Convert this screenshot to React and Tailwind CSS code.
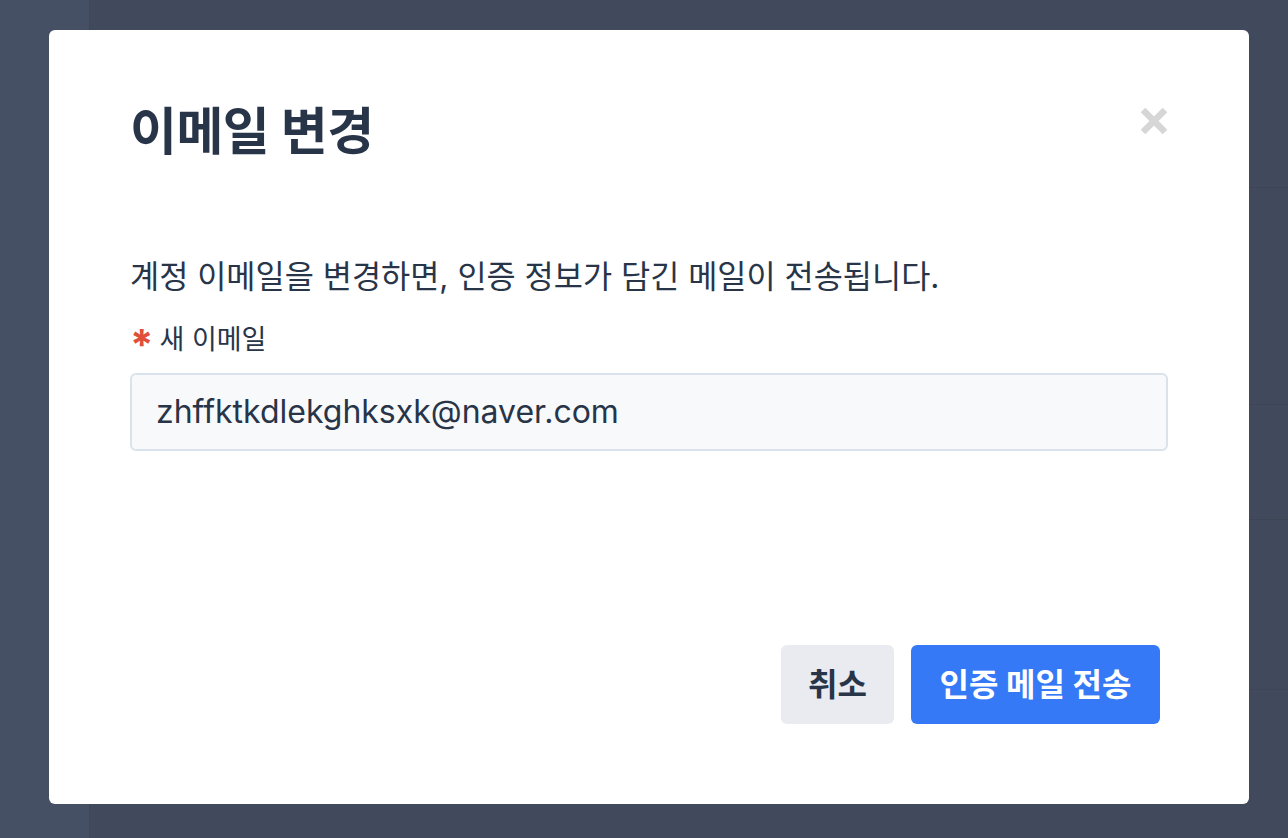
import React from "react";

const font = { fontFamily: 'Inter, "Noto Sans CJK KR", sans-serif' };

export default function App() {
  return (
    <div className="relative w-[1288px] h-[838px] overflow-hidden bg-[#414a5c]" style={font}>
      {/* background page behind overlay */}
      <div className="flex h-full">
        <div className="w-[90px] h-full bg-[#465064] border-r border-[#3e4657]" />
        <div className="flex-1 flex flex-col">
          <div className="h-[188px] border-b border-[#3d4555]" />
          <div className="h-[217px] border-b border-[#3d4555]" />
          <div className="h-[115px] border-b border-[#3d4555]" />
          <div className="h-[170px] border-b border-[#3d4555]" />
          <div className="flex-1" />
        </div>
      </div>

      {/* modal */}
      <div className="absolute left-[49px] top-[30px] w-[1200px] h-[774px] bg-white rounded-[6px] flex flex-col pl-[81px] pr-[81px] pt-[72px] pb-[80px]">
        <div className="flex items-start justify-between">
          <h2 className="text-[51px] leading-[60px] font-bold text-[#283548] tracking-[-0.5px]">이메일 변경</h2>
          <button className="mt-[4px] -mr-[1px] w-[30px] h-[30px] flex items-center justify-center text-[#d6d6d6]">
            <svg width="28" height="28" viewBox="0 0 28 28">
              <path d="M3 3 L25 25 M25 3 L3 25" stroke="currentColor" strokeWidth="6.5" strokeLinecap="butt" />
            </svg>
          </button>
        </div>

        <p className="mt-[95px] text-[31.7px] leading-[40px] text-[#283548]">
          계정 이메일을 변경하면, 인증 정보가 담긴 메일이 전송됩니다.
        </p>

        <label className="mt-[26px] h-[34px] flex items-center text-[27px] leading-[34px] text-[#283548]">
          <span className="text-[#e04f3a] text-[42px] leading-[34px] font-bold mr-[6px] translate-y-[5px]">*</span>
          새 이메일
        </label>

        <div className="mt-[16px] h-[78px] w-full rounded-[6px] border-2 border-[#dae3ec] bg-[#f8f9fb] flex items-center px-[24px]">
          <span className="text-[32px] text-[#283548]">zhffktkdlekghksxk@naver.com</span>
        </div>

        <div className="flex-1" />

        <div className="flex justify-end gap-[17px] pr-[8px]">
          <button className="h-[79px] w-[113px] rounded-[6px] bg-[#e9ebf0] text-[32px] font-bold text-[#283548]">
            취소
          </button>
          <button className="h-[79px] w-[249px] rounded-[6px] bg-[#3579f6] text-[32px] font-bold text-white">
            인증 메일 전송
          </button>
        </div>
      </div>
    </div>
  );
}
